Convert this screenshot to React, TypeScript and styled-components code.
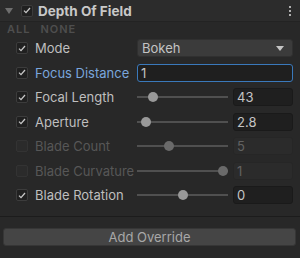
import React from 'react';
import styled, { createGlobalStyle, css } from 'styled-components';

const GlobalStyle = createGlobalStyle`
  html, body {
    margin: 0;
    padding: 0;
    background: #282828;
  }
  body {
    font-family: Inter, "Noto Sans", "Liberation Sans", sans-serif;
    -webkit-font-smoothing: antialiased;
  }
`;

const Frame = styled.div`
  display: flex;
  width: 300px;
  height: 258px;
  overflow: hidden;
`;

const Panel = styled.div`
  flex: 1;
  display: flex;
  flex-direction: column;
  background: #282828;
`;

const Scrollbar = styled.div`
  width: 5px;
  background: #3d3d3d;
  border-left: 1px solid #1c1c1c;
`;

const Header = styled.div`
  height: 21px;
  display: flex;
  align-items: center;
  padding-left: 5px;
  padding-right: 9px;
  background: #2c2c2c;
  border-bottom: 1px solid #232323;
`;

const Foldout = styled.div`
  width: 0;
  height: 0;
  border-left: 4px solid transparent;
  border-right: 4px solid transparent;
  border-top: 6px solid #6e6e6e;
  margin-right: 8px;
`;

const Title = styled.div`
  flex: 1;
  margin-left: 5px;
  font-size: 13.5px;
  font-weight: 700;
  color: #c8c8c8;
`;

const Kebab = styled.div`
  display: flex;
  flex-direction: column;
  gap: 2px;
  span {
    width: 2px;
    height: 2px;
    background: #b0b0b0;
  }
`;

const Toggles = styled.div`
  height: 14px;
  display: flex;
  align-items: center;
  gap: 10px;
  padding-left: 7px;
  font-size: 11px;
  font-weight: 600;
  letter-spacing: 1px;
  color: #4e4e4e;
`;

const Rows = styled.div`
  display: flex;
  flex-direction: column;
`;

const Row = styled.div`
  height: 24.5px;
  display: flex;
  align-items: center;
  padding-left: 16px;
  padding-right: 7px;
`;

const Box = styled.div<{ $checked: boolean }>`
  width: 10px;
  height: 10px;
  border-radius: 2px;
  display: flex;
  align-items: center;
  justify-content: center;
  background: ${p => (p.$checked ? '#202020' : '#2b2b2b')};
  border: 1px solid ${p => (p.$checked ? '#3c3c3c' : '#333333')};
  flex-shrink: 0;
`;

const Label = styled.div<{ $state: 'normal' | 'focus' | 'disabled' }>`
  width: 102px;
  margin-left: 7px;
  font-size: 13px;
  white-space: nowrap;
  color: ${p => (p.$state === 'focus' ? '#7aa6dc' : p.$state === 'disabled' ? '#575757' : '#bfbfbf')};
`;

const Control = styled.div`
  flex: 1;
  display: flex;
  align-items: center;
  height: 18px;
`;

const Dropdown = styled.div`
  flex: 1;
  height: 16px;
  display: flex;
  align-items: center;
  justify-content: space-between;
  padding: 0 8px 0 4px;
  border-radius: 3px;
  background: #3b3b3b;
  border: 1px solid #303030;
  font-size: 13px;
  color: #c4c4c4;
`;

const Caret = styled.div`
  width: 0;
  height: 0;
  border-left: 4px solid transparent;
  border-right: 4px solid transparent;
  border-top: 5px solid #c4c4c4;
`;

const Field = styled.div<{ $focus?: boolean; $disabled?: boolean; $width?: number }>`
  ${p => (p.$width ? css`width: ${p.$width}px;` : css`flex: 1;`)}
  height: 16px;
  display: flex;
  align-items: center;
  padding-left: 3px;
  border-radius: 3px;
  font-size: 13px;
  background: ${p => (p.$disabled ? '#2b2b2b' : '#1f1f1f')};
  border: 1px solid ${p => (p.$focus ? '#3a79bb' : p.$disabled ? '#262626' : '#1a1a1a')};
  color: ${p => (p.$disabled ? '#626262' : '#c4c4c4')};
`;

const Track = styled.div`
  position: relative;
  width: 91px;
  height: 10px;
  margin-right: 5px;
  &::before {
    content: '';
    position: absolute;
    left: 0;
    right: 0;
    top: 4px;
    height: 2px;
    background: #505050;
  }
`;

const Knob = styled.div<{ $disabled?: boolean }>`
  position: absolute;
  top: 0;
  width: 10px;
  height: 10px;
  border-radius: 50%;
  background: ${p => (p.$disabled ? '#6a6a6a' : '#999999')};
`;

const Divider = styled.div`
  margin-top: 8px;
  height: 1px;
  background: #1c1c1c;
`;

const AddButton = styled.div`
  margin: 11px 4px 0 3px;
  height: 16px;
  display: flex;
  align-items: center;
  justify-content: center;
  border-radius: 3px;
  background: #454545;
  border: 1px solid #363636;
  font-size: 13px;
  color: #a8a8a8;
`;

const Check = () => (
  <svg width="8" height="7" viewBox="0 0 8 7">
    <path d="M1 3.6 L3 5.6 L7 1" fill="none" stroke="#c8c8c8" strokeWidth="1.3" />
  </svg>
);

type Slider = {
  label: string;
  value: string;
  pos: number;
  enabled: boolean;
};

const sliders: Slider[] = [
  { label: 'Focal Length', value: '43', pos: 0.136, enabled: true },
  { label: 'Aperture', value: '2.8', pos: 0.05, enabled: true },
  { label: 'Blade Count', value: '5', pos: 0.333, enabled: false },
  { label: 'Blade Curvature', value: '1', pos: 1, enabled: false },
  { label: 'Blade Rotation', value: '0', pos: 0.5, enabled: true },
];

export default function App() {
  return (
    <>
      <GlobalStyle />
      <Frame>
        <Panel>
          <Header>
            <Foldout />
            <Box $checked>
              <Check />
            </Box>
            <Title>Depth Of Field</Title>
            <Kebab>
              <span />
              <span />
              <span />
            </Kebab>
          </Header>
          <Toggles>
            <span>ALL</span>
            <span>NONE</span>
          </Toggles>
          <Rows>
            <Row>
              <Box $checked>
                <Check />
              </Box>
              <Label $state="normal">Mode</Label>
              <Control>
                <Dropdown>
                  <span>Bokeh</span>
                  <Caret />
                </Dropdown>
              </Control>
            </Row>
            <Row>
              <Box $checked>
                <Check />
              </Box>
              <Label $state="focus">Focus Distance</Label>
              <Control>
                <Field $focus>1</Field>
              </Control>
            </Row>
            {sliders.map(s => (
              <Row key={s.label}>
                <Box $checked={s.enabled}>{s.enabled && <Check />}</Box>
                <Label $state={s.enabled ? 'normal' : 'disabled'}>{s.label}</Label>
                <Control>
                  <Track>
                    <Knob $disabled={!s.enabled} style={{ left: `${s.pos * 81}px` }} />
                  </Track>
                  <Field $disabled={!s.enabled} $width={55}>
                    {s.value}
                  </Field>
                </Control>
              </Row>
            ))}
          </Rows>
          <Divider />
          <AddButton>Add Override</AddButton>
        </Panel>
        <Scrollbar />
      </Frame>
    </>
  );
}
